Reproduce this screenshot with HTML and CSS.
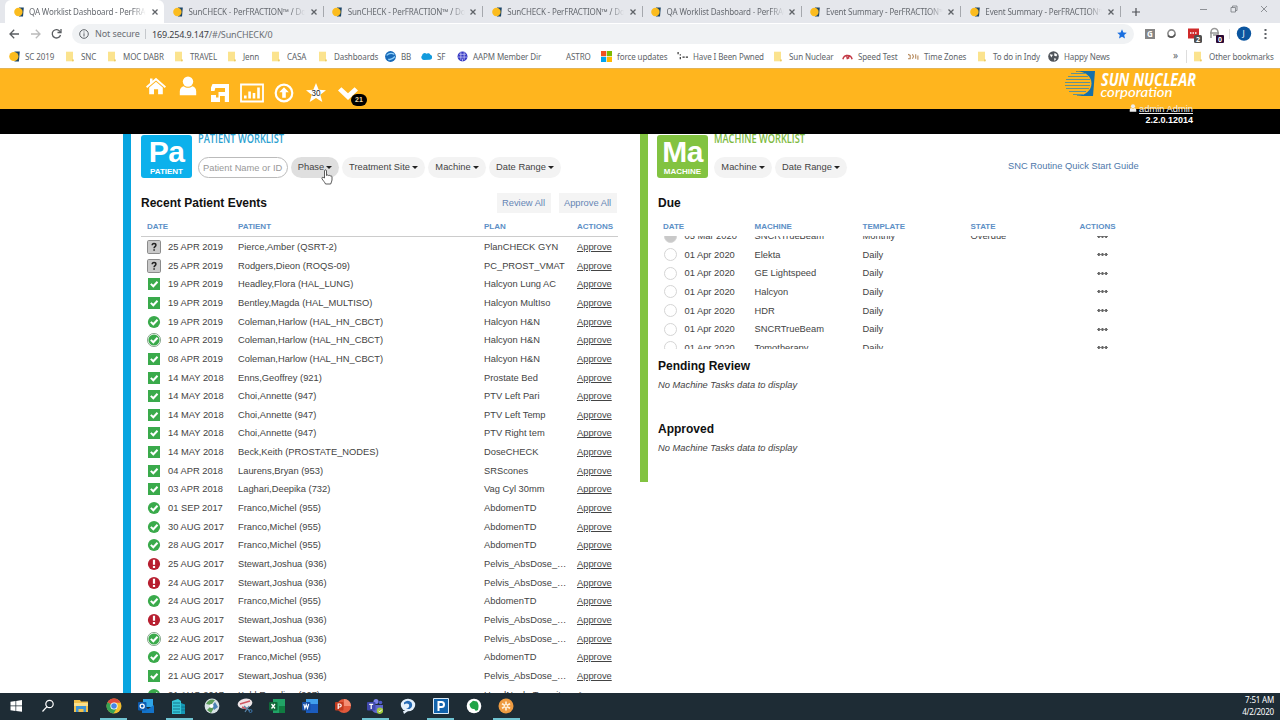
FILE: index.html
```html
<!DOCTYPE html>
<html lang="en">
<head>
    <meta charset="UTF-8">
    <meta name="viewport" content="width=device-width, initial-scale=1.0">
    <title>QA Worklist Dashboard - PerFRACTION</title>
    <link rel="stylesheet" href="styles.css">
</head>
<body>
    <!-- shared icons -->
    <svg class="defs" width="0" height="0">
        <symbol id="fav" viewBox="0 0 10 10"><path d="M5 .5h4.8L9 9.5H5z" fill="#1d4668"/><circle cx="4.4" cy="5" r="4.2" fill="#fbbc1f"/></symbol>
        <symbol id="folder" viewBox="0 0 10 11"><path d="M.5 .7h7v9.6h-7z" fill="#fbe38e"/><path d="M6.500 8.6h1.800v1.700H6.500z" fill="#eccb62"/></symbol>
        <symbol id="x" viewBox="0 0 8 8"><path d="M1.500 1.500l5 5m0-5l-5 5" stroke="#5f6368" stroke-width="1.300"/></symbol>
        <symbol id="unknown" viewBox="0 0 14 14"><rect x=".5" y=".5" width="13" height="13" rx="1.2" fill="#c9c9c9" stroke="#8b8b8b"/><path d="M5.2 5.3c0-2.4 3.7-2.3 3.7-.1 0 1.4-1.8 1.4-1.8 3M7.1 9.2v1.5" fill="none" stroke="#222" stroke-width="1.5"/></symbol>
        <symbol id="ok" viewBox="0 0 14 14"><path d="M1 1h12v12H1z" fill="#3aaa4b"/><path d="M3.8 6.9l2.5 2.4 4.2-4.5" fill="none" stroke="#fff" stroke-width="2"/></symbol>
        <symbol id="ok-round" viewBox="0 0 14 14"><circle cx="7" cy="7" r="6.1" fill="#3aaa4b"/><path d="M3.8 6.9l2.5 2.4 4.2-4.5" fill="none" stroke="#fff" stroke-width="2"/></symbol>
        <symbol id="ok-ring" viewBox="0 0 14 14"><circle cx="7" cy="7" r="6.6" fill="#fff" stroke="#5f8866" stroke-width=".7"/><circle cx="7" cy="7" r="5.6" fill="#3aaa4b"/><path d="M3.8 6.9l2.5 2.4 4.2-4.5" fill="none" stroke="#fff" stroke-width="2"/></symbol>
        <symbol id="fail" viewBox="0 0 14 14"><circle cx="7" cy="7" r="6.1" fill="#b71f30"/><path d="M7 2.8v5M7 9.1v2" stroke="#fff" stroke-width="2.2"/></symbol>
        <symbol id="user" viewBox="0 0 18 20"><circle cx="9" cy="5.6" r="5.2"/><path d="M.8 19.3v-4c0-3 2-4.5 4-5 2.5 2 5.9 2 8.4 0 2 .5 4 2 4 5v4z"/></symbol>
    </svg>

    <div class="tabs">
        <div class="tab active"><svg class="fav"><use href="#fav"/></svg><span>QA Worklist Dashboard - PerFRACTION™</span><svg class="close"><use href="#x"/></svg></div>
        <div class="tab"><svg class="fav"><use href="#fav"/></svg><span>SunCHECK - PerFRACTION™ / Dose</span><svg class="close"><use href="#x"/></svg></div>
        <div class="tab"><svg class="fav"><use href="#fav"/></svg><span>SunCHECK - PerFRACTION™ / Dose</span><svg class="close"><use href="#x"/></svg></div>
        <div class="tab"><svg class="fav"><use href="#fav"/></svg><span>SunCHECK - PerFRACTION™ / Dose</span><svg class="close"><use href="#x"/></svg></div>
        <div class="tab"><svg class="fav"><use href="#fav"/></svg><span>QA Worklist Dashboard - PerFRACTION™</span><svg class="close"><use href="#x"/></svg></div>
        <div class="tab"><svg class="fav"><use href="#fav"/></svg><span>Event Summary - PerFRACTION™</span><svg class="close"><use href="#x"/></svg></div>
        <div class="tab"><svg class="fav"><use href="#fav"/></svg><span>Event Summary - PerFRACTION™</span><svg class="close"><use href="#x"/></svg></div>
        <svg class="new-tab" width="10" height="10" viewBox="0 0 10 10"><path d="M5 1v8M1 5h8" stroke="#4c4f54" stroke-width="1.2"/></svg>
        <svg class="win" width="70" height="10" viewBox="0 0 70 10" fill="none" stroke="#777b80" stroke-width=".8"><path d="M1 5.5h7M32 3.5h4.5v4.5H32zM33.5 3.5V2H38v4.5h-1.5M62 2l6 6m0-6l-6 6"/></svg>
    </div>

    <div class="toolbar">
        <svg class="nav-btns" width="58" height="14" viewBox="0 0 58 14" fill="none" stroke="#5a5d61" stroke-width="1.3"><path d="M10 7H1m4.2-4.2L1 7l4.2 4.2"/><path d="M22 7h9m-4.2-4.2L31 7l-4.2 4.2" stroke="#bbb"/><path d="M51 4.5A4.2 4.2 0 1 0 51.500 8M52 2v3.500h-3.500"/></svg>
        <div class="omnibox">
            <svg width="10" height="10" viewBox="0 0 10 10" fill="none" stroke="#5f6368"><circle cx="5" cy="5" r="4.3"/><path d="M5 4.3v3.2M5 2.5v1"/></svg>
            <span class="insecure">Not secure</span>
            <span class="url"><b>169.254.9.147</b>/#/SunCHECK/0</span>
            <svg class="star" width="10" height="10" viewBox="0 0 10 10"><path d="M5 .2l1.4 3.2 3.4.3-2.6 2.3.8 3.5L5 7.7 2 9.5l.8-3.5L.2 3.7l3.4-.3z" fill="#1a6fe0"/></svg>
        </div>
        <svg class="ext" width="130" height="20" viewBox="0 0 130 20">
            <path d="M1 5h10v10H1z" fill="#858585"/><text x="3" y="13" font-size="8" font-weight="bold" fill="#fff">G</text>
            <circle cx="27.5" cy="9.5" r="3.6" fill="#fff" stroke="#888" stroke-width="1.6"/><path d="M24 11.500a4 4 0 0 0 7-1" fill="none" stroke="#555" stroke-width="1.800"/>
            <path d="M44 4.5h11v10H44z" fill="#cf2b2b"/><path d="M46 9h7" stroke="#fff" stroke-width="1.5" stroke-dasharray="1.5 1"/>
            <rect x="50" y="11" width="8" height="8" rx="1.5" fill="#505050"/><text x="52" y="17.8" font-size="7" font-weight="bold" fill="#fff">2</text>
            <path d="M67 14V8a3.5 3.5 0 0 1 7 0v6M66 9h9M69 11h4" fill="none" stroke="#999" stroke-width="1.5"/>
            <rect x="72" y="11" width="8" height="8" rx="1" fill="#2b0934"/><text x="74" y="17.8" font-size="7" font-weight="bold" fill="#fff">0</text>
            <path d="M85.500 5v10" stroke="#ddd"/>
            <circle cx="100" cy="9.6" r="7.2" fill="#0b559f"/><text x="98.5" y="12.5" font-size="8" fill="#fff">J</text>
            <path d="M120.500 5h2v2h-2zM120.500 9h2v2h-2zM120.500 13h2v2h-2z" fill="#5f6368"/>
        </svg>
    </div>

    <div class="bookmarks">
        <a><svg><use href="#fav"/></svg>SC 2019</a>
        <a><svg><use href="#folder"/></svg>SNC</a>
        <a><svg><use href="#folder"/></svg>MOC DABR</a>
        <a><svg><use href="#folder"/></svg>TRAVEL</a>
        <a><svg><use href="#folder"/></svg>Jenn</a>
        <a><svg><use href="#folder"/></svg>CASA</a>
        <a><svg><use href="#folder"/></svg>Dashboards</a>
        <a><svg viewBox="0 0 10 10"><circle cx="5" cy="5" r="4.9" fill="#1769b8"/><path d="M1.5 4q3-3 7-1M3 7.5q3 1 6-2.5" stroke="#8fd0fa" fill="none" stroke-width="1.2"/></svg>BB</a>
        <a><svg viewBox="0 0 10 10"><path d="M2.500 8.200A2.500 2.500 0 0 1 1 4a2.400 2.400 0 0 1 4-1.500A2.200 2.200 0 0 1 8.500 3.500 2.300 2.300 0 0 1 8 8z" fill="#139bdd"/></svg>SF</a>
        <a><svg viewBox="0 0 10 10"><circle cx="5" cy="5" r="4.5" fill="#3639c4"/><path d="M2 3h6M1 5.5h8M3.5 1v7M6.5 1v7M5 7v3" stroke="#c8c8f4" stroke-width=".7"/></svg>AAPM Member Dir</a>
        <a><svg></svg>ASTRO</a>
        <a><svg viewBox="0 0 10 10"><path d="M0 0h4.7v4.7H0z" fill="#f25022"/><path d="M5.3 0H10v4.7H5.3z" fill="#7fba00"/><path d="M0 5.3h4.7V10H0z" fill="#00a4ef"/><path d="M5.3 5.3H10V10H5.3z" fill="#ffb900"/></svg>force updates</a>
        <a><svg viewBox="0 0 10 10"><path d="M1 1v2M3 3v1M3 5.5v2M5 5.500h2M8 5.500h2" stroke="#333" stroke-width="1.1"/></svg>Have I Been Pwned</a>
        <a><svg><use href="#folder"/></svg>Sun Nuclear</a>
        <a><svg viewBox="0 0 10 10"><path d="M.8 7.5a4.3 4.3 0 0 1 8.4 0M5 7.5L4 3.5M6 7V4" stroke="#c23845" stroke-width="1.3" fill="none"/></svg>Speed Test</a>
        <a><svg viewBox="0 0 10 10"><path d="M0 3l2 1v3H0M4 3l1 2-1 2M7 3v4M9 4v4" stroke="#b78a5d" fill="none"/></svg>Time Zones</a>
        <a><svg><use href="#folder"/></svg>To do in Indy</a>
        <a><svg viewBox="0 0 10 10"><circle cx="5" cy="5" r="4.8" fill="#50545a"/><path d="M1.5 3l3 .5L3 6zM6 1.5l2.5 2-1 1.5-2-1zM5.5 6.5l2 .5-1.5 2z" fill="#fff"/></svg>Happy News</a>
        <span class="more">»</span>
        <a class="other"><svg><use href="#folder"/></svg>Other bookmarks</a>
    </div>

    <header class="app-header">
        <nav class="app-nav">
            <svg class="up" viewBox="0 0 20 18"><path d="M10 .8L20 9.5l-1.200 1.400L10 3.400 1.200 10.900 0 9.500l4-3.500V1.500h2.500v2.300z"/><path d="M3.200 10.500L10 4.700l6.800 5.800v6.700h-4.700v-5H8v5H3.200z"/></svg>
            <svg class="up"><use href="#user"/></svg>
            <svg viewBox="0 0 20 20"><path d="M5 1h14v18h-4.200v-6H10v6H1v-7h5v2.500h2.500V9H15V5H5.300l-.8 3H1V4.500L2.500 1z"/></svg>
            <svg class="wide" viewBox="0 0 24 19"><path d="M1 1h22v17H1z" fill="none" stroke="#fff" stroke-width="1.8"/><path d="M4 12h2.600v3H4zM8.300 8h2.600v7H8.300zM12.700 9.500h2.600V15h-2.600zM17.200 4h2.600v11h-2.600z"/></svg>
            <svg viewBox="0 0 20 20"><circle cx="10" cy="10" r="8.3" fill="none" stroke="#fff" stroke-width="2.2"/><path d="M10 4.2l4.800 5h-3v5.600H8.200V9.200h-3z"/></svg>
            <svg viewBox="0 0 20 20"><path d="M10 0l2.700 6.800 7.300.4-5.700 4.600 2 7.200L10 15l-6.300 4 2-7.200L0 7.200l7.300-.4z"/><text x="10" y="13.400" text-anchor="middle" font-size="8.500" textLength="9" lengthAdjust="spacingAndGlyphs" fill="#222">30</text></svg>
            <span class="alerts">
                <svg viewBox="0 0 20 20"><path d="M0 7.500l3.400-3.300L10 10.200l6.600-6 3.400 3.300L10 17z"/></svg>
                <em>21</em>
            </span>
        </nav>
        <svg class="brand" width="136" height="32" viewBox="0 0 136 32">
            <path d="M12 2h19l-2 25H13z" fill="#1470a9"/>
            <ellipse cx="14" cy="14.5" rx="13.5" ry="12" fill="#ffb51e"/>
            <path d="M7 4.500h14M4 7.500h20M2 10.500h24M1 13.500h25M1 16.500h25M2 19.500h23M5 22.500h17M9 25.500h10" stroke="#5f9292" stroke-width="1.1"/>
            <text class="sun" x="37" y="16.5" textLength="95" lengthAdjust="spacingAndGlyphs">SUN NUCLEAR</text>
            <text class="corp" x="36.5" y="28" textLength="72" lengthAdjust="spacingAndGlyphs">corporation</text>
        </svg>
        <div class="account">
            <div><svg><use href="#user"/></svg><a>admin Admin</a></div>
            <b>2.2.0.12014</b>
        </div>
    </header>

    <main class="worklists">
        <section class="patient">
            <div class="head">
                <div class="tile"><b>Pa</b><span>PATIENT</span></div>
                <div>
                    <svg class="title" width="90" height="11"><text x="0" y="9" textLength="86" lengthAdjust="spacingAndGlyphs">PATIENT WORKLIST</text></svg>
                    <div class="filters">
                        <input type="text" placeholder="Patient Name or ID">
                        <button class="phase hover">Phase<i></i></button>
                        <button class="site">Treatment Site<i></i></button>
                        <button class="mach">Machine<i></i></button>
                        <button class="range">Date Range<i></i></button>
                        <svg class="cursor" viewBox="0 0 12 16"><path d="M3.5 9V2c0-1.600 2-1.600 2 0v4.500c.3-.8 1.700-.7 1.900.2.500-.7 1.700-.4 1.800.4.700-.5 1.800-.1 1.800.9v3c0 1.500-1 2.300-1.300 4H4.500C4 13.500 2 11.500 1 9.800c-.6-1.200.8-2 1.700-1.200z" fill="#fff" stroke="#333" stroke-width=".8"/></svg>
                    </div>
                </div>
            </div>
            <div class="sub">
                <h2>Recent Patient Events</h2>
                <button class="review">Review All</button>
                <button class="approve">Approve All</button>
            </div>
            <div class="row th"><span class="date">DATE</span><span>PATIENT</span><span>PLAN</span><span>ACTIONS</span></div>
            <div class="events">
                <div class="row"><svg><use href="#unknown"/></svg><span>25 APR 2019</span><span>Pierce,Amber (QSRT-2)</span><span>PlanCHECK GYN</span><a>Approve</a></div>
                <div class="row"><svg><use href="#unknown"/></svg><span>25 APR 2019</span><span>Rodgers,Dieon (ROQS-09)</span><span>PC_PROST_VMAT</span><a>Approve</a></div>
                <div class="row"><svg><use href="#ok"/></svg><span>19 APR 2019</span><span>Headley,Flora (HAL_LUNG)</span><span>Halcyon Lung AC</span><a>Approve</a></div>
                <div class="row"><svg><use href="#ok"/></svg><span>19 APR 2019</span><span>Bentley,Magda (HAL_MULTISO)</span><span>Halcyon MultIso</span><a>Approve</a></div>
                <div class="row"><svg><use href="#ok-round"/></svg><span>19 APR 2019</span><span>Coleman,Harlow (HAL_HN_CBCT)</span><span>Halcyon H&amp;N</span><a>Approve</a></div>
                <div class="row"><svg><use href="#ok-ring"/></svg><span>10 APR 2019</span><span>Coleman,Harlow (HAL_HN_CBCT)</span><span>Halcyon H&amp;N</span><a>Approve</a></div>
                <div class="row"><svg><use href="#ok"/></svg><span>08 APR 2019</span><span>Coleman,Harlow (HAL_HN_CBCT)</span><span>Halcyon H&amp;N</span><a>Approve</a></div>
                <div class="row"><svg><use href="#ok"/></svg><span>14 MAY 2018</span><span>Enns,Geoffrey (921)</span><span>Prostate Bed</span><a>Approve</a></div>
                <div class="row"><svg><use href="#ok"/></svg><span>14 MAY 2018</span><span>Choi,Annette (947)</span><span>PTV Left Pari</span><a>Approve</a></div>
                <div class="row"><svg><use href="#ok"/></svg><span>14 MAY 2018</span><span>Choi,Annette (947)</span><span>PTV Left Temp</span><a>Approve</a></div>
                <div class="row"><svg><use href="#ok"/></svg><span>14 MAY 2018</span><span>Choi,Annette (947)</span><span>PTV Right tem</span><a>Approve</a></div>
                <div class="row"><svg><use href="#ok"/></svg><span>14 MAY 2018</span><span>Beck,Keith (PROSTATE_NODES)</span><span>DoseCHECK</span><a>Approve</a></div>
                <div class="row"><svg><use href="#ok"/></svg><span>04 APR 2018</span><span>Laurens,Bryan (953)</span><span>SRScones</span><a>Approve</a></div>
                <div class="row"><svg><use href="#ok"/></svg><span>03 APR 2018</span><span>Laghari,Deepika (732)</span><span>Vag Cyl 30mm</span><a>Approve</a></div>
                <div class="row"><svg><use href="#ok-round"/></svg><span>01 SEP 2017</span><span>Franco,Michel (955)</span><span>AbdomenTD</span><a>Approve</a></div>
                <div class="row"><svg><use href="#ok-round"/></svg><span>30 AUG 2017</span><span>Franco,Michel (955)</span><span>AbdomenTD</span><a>Approve</a></div>
                <div class="row"><svg><use href="#ok-round"/></svg><span>28 AUG 2017</span><span>Franco,Michel (955)</span><span>AbdomenTD</span><a>Approve</a></div>
                <div class="row"><svg><use href="#fail"/></svg><span>25 AUG 2017</span><span>Stewart,Joshua (936)</span><span>Pelvis_AbsDose_…</span><a>Approve</a></div>
                <div class="row"><svg><use href="#fail"/></svg><span>24 AUG 2017</span><span>Stewart,Joshua (936)</span><span>Pelvis_AbsDose_…</span><a>Approve</a></div>
                <div class="row"><svg><use href="#ok-round"/></svg><span>24 AUG 2017</span><span>Franco,Michel (955)</span><span>AbdomenTD</span><a>Approve</a></div>
                <div class="row"><svg><use href="#fail"/></svg><span>23 AUG 2017</span><span>Stewart,Joshua (936)</span><span>Pelvis_AbsDose_…</span><a>Approve</a></div>
                <div class="row"><svg><use href="#ok-ring"/></svg><span>22 AUG 2017</span><span>Stewart,Joshua (936)</span><span>Pelvis_AbsDose_…</span><a>Approve</a></div>
                <div class="row"><svg><use href="#ok-round"/></svg><span>22 AUG 2017</span><span>Franco,Michel (955)</span><span>AbdomenTD</span><a>Approve</a></div>
                <div class="row"><svg><use href="#ok"/></svg><span>21 AUG 2017</span><span>Stewart,Joshua (936)</span><span>Pelvis_AbsDose_…</span><a>Approve</a></div>
                <div class="row"><svg><use href="#ok-round"/></svg><span>21 AUG 2017</span><span>Kehl,Rosalina (907)</span><span>HeadNeck_Transit</span><a>Approve</a></div>
            </div>
        </section>

        <section class="machine">
            <div class="head">
                <div class="tile"><b>Ma</b><span>MACHINE</span></div>
                <div>
                    <svg class="title" width="96" height="11"><text x="0" y="9" textLength="91" lengthAdjust="spacingAndGlyphs">MACHINE WORKLIST</text></svg>
                    <div class="filters">
                        <button class="mach">Machine<i></i></button>
                        <button class="range">Date Range<i></i></button>
                    </div>
                </div>
                <a class="guide">SNC Routine Quick Start Guide</a>
            </div>
            <div class="sub"><h2>Due</h2></div>
            <div class="row th"><span class="date">DATE</span><span>MACHINE</span><span>TEMPLATE</span><span>STATE</span><span>ACTIONS</span></div>
            <div class="due">
                <div class="row"><i class="dot late"></i><span>05 Mar 2020</span><span>SNCRTrueBeam</span><span>Monthly</span><span>Overdue</span><em></em></div>
                <div class="row"><i class="dot"></i><span>01 Apr 2020</span><span>Elekta</span><span>Daily</span><span></span><em></em></div>
                <div class="row"><i class="dot"></i><span>01 Apr 2020</span><span>GE Lightspeed</span><span>Daily</span><span></span><em></em></div>
                <div class="row"><i class="dot"></i><span>01 Apr 2020</span><span>Halcyon</span><span>Daily</span><span></span><em></em></div>
                <div class="row"><i class="dot"></i><span>01 Apr 2020</span><span>HDR</span><span>Daily</span><span></span><em></em></div>
                <div class="row"><i class="dot"></i><span>01 Apr 2020</span><span>SNCRTrueBeam</span><span>Daily</span><span></span><em></em></div>
                <div class="row"><i class="dot"></i><span>01 Apr 2020</span><span>Tomotherapy</span><span>Daily</span><span></span><em></em></div>
            </div>
            <h2 class="pending">Pending Review</h2>
            <p>No Machine Tasks data to display</p>
            <h2 class="approved">Approved</h2>
            <p>No Machine Tasks data to display</p>
        </section>
    </main>

    <footer class="taskbar">
        <div class="app"><svg viewBox="0 0 16 16"><path d="M2.500 3.700l5-.7v4.600h-5zM8.200 2.900l5.800-.8v5.500H8.200zM2.500 8.300h5v4.600l-5-.7zM8.200 8.300H14v5.500l-5.800-.8z" fill="#fff"/></svg></div>
        <div class="app"><svg viewBox="0 0 16 16" fill="none" stroke="#fff" stroke-width="1.2"><circle cx="9.5" cy="6" r="3.7"/><path d="M7 8.7L2.500 13.500"/></svg></div>
        <div class="app"><svg viewBox="0 0 16 16"><path d="M1 2h6l1 1.500h7V14H1z" fill="#f2c14a"/><path d="M1 5h14v3H1z" fill="#fbe08a"/><path d="M3 8h10v6h-2.500v-3h-5v3H3z" fill="#4095d3"/></svg></div>
        <div class="app open"><svg viewBox="0 0 16 16"><circle cx="8" cy="8" r="7.5" fill="#f1bd2e"/><path d="M8 8L1.500 4.200A7.500 7.500 0 0 1 14.700 4.700H8z" fill="#dd4b3e"/><path d="M1.500 4.200A7.500 7.500 0 0 0 7.500 15.500L11 9.700 8 8z" fill="#38a355"/><circle cx="8" cy="8" r="3.6" fill="#fff"/><circle cx="8" cy="8" r="2.8" fill="#4486e8"/></svg></div>
        <div class="app"><svg viewBox="0 0 16 16"><path d="M5 1h10v8H5z" fill="#2fa6e8"/><path d="M4 7l6 4 6-4v8H4z" fill="#1373c9"/><rect x="0" y="4" width="8.5" height="8.5" rx="1" fill="#0d5bb0"/><circle cx="4.2" cy="8.2" r="2" fill="none" stroke="#fff" stroke-width="1.3"/></svg></div>
        <div class="app open"><svg viewBox="0 0 16 16"><path d="M1 3l6-2 3 2v13H1z" fill="#36c6d8"/><path d="M10 5l4 1.500V16h-4z" fill="#1598b6"/><path d="M2 5h7M2 8h7M2 11h7M2 14h7M10.500 9H14m-3.500 3H14" stroke="#106e86" stroke-width=".9"/></svg></div>
        <div class="app"><svg viewBox="0 0 16 16"><circle cx="8" cy="8" r="7.4" fill="#d9e2e5"/><path d="M2 6q3-6 9-4l-4 5zM3 12l4-4 3 2-3 5z" fill="#5a9b59"/><path d="M8 8l3-4 3 5-4 3z" fill="#4c83b5"/><circle cx="7.5" cy="8" r="2" fill="#fff"/></svg></div>
        <div class="app"><svg viewBox="0 0 16 16"><ellipse cx="8" cy="5.5" rx="7.4" ry="4.8" fill="#eee6e8" transform="rotate(-12 8 5.5)"/><path d="M3 6l10-3M5 9l5 2" stroke="#d05661" stroke-width="1.4"/><path d="M7 8l6 5M12 8l-4 6" stroke="#5c89ab" stroke-width="1.2"/><circle cx="13.5" cy="13" r="1.5" fill="none" stroke="#3d77b0"/></svg></div>
        <div class="app"><svg viewBox="0 0 16 16"><path d="M4 1h12v14H4z" fill="#21a366"/><path d="M10 8h6v7h-6z" fill="#107c41"/><rect y="4" width="8.5" height="8.5" rx="1" fill="#0f6939"/><path d="M2.500 6l3.500 4.500M6 6l-3.500 4.500" stroke="#fff" stroke-width="1.3"/></svg></div>
        <div class="app"><svg viewBox="0 0 16 16"><path d="M4 1h12v14H4z" fill="#41a0ec"/><path d="M4 6h12v9H4z" fill="#1b5cbe"/><rect y="4" width="8.5" height="8.5" rx="1" fill="#184fa5"/><path d="M1.800 6l1.100 4.400L4.200 6.500l1.300 3.900L6.700 6" fill="none" stroke="#fff" stroke-width="1.1"/></svg></div>
        <div class="app"><svg viewBox="0 0 16 16"><circle cx="9" cy="8" r="7" fill="#e2593b"/><path d="M9 1a7 7 0 0 1 7 7H9z" fill="#f58f74"/><rect y="4" width="8.5" height="8.5" rx="1" fill="#c13b1f"/><path d="M3.200 11V6h1.500a1.500 1.500 0 0 1 0 3H3.200" fill="none" stroke="#fff" stroke-width="1.2"/></svg></div>
        <div class="app open"><svg viewBox="0 0 16 16"><circle cx="9" cy="3.5" r="2.5" fill="#7b83eb"/><circle cx="13.5" cy="4.5" r="1.8" fill="#5059c9"/><path d="M5 7h11v5q-2 4-7 3-4-1-4-4z" fill="#5e66cd"/><rect y="4" width="8.5" height="8.5" rx="1" fill="#4149ae"/><path d="M2.200 6.300h4M4.200 6.300V11" stroke="#fff" stroke-width="1.2"/><circle cx="13" cy="12.7" r="3.2" fill="#9fc93c"/><path d="M11.500 12.700l1.200 1.200 2-2.200" fill="none" stroke="#fff"/></svg></div>
        <div class="app"><svg viewBox="0 0 16 16"><ellipse cx="8" cy="7" rx="7.2" ry="6.300" fill="#e4f0fb"/><path d="M3 13l1 3 4-3z" fill="#e4f0fb"/><path d="M4 4.500q4-3.500 7.500 0 2 4-2 6.500H6q4-1.500 3-4.500-2-2-5 0z" fill="#266bb5"/></svg></div>
        <div class="app open"><svg viewBox="0 0 16 16"><path d="M.5.5h15v15H.5z" fill="#1263ac" stroke="#dceaf5"/><path d="M5.500 13V4h3a2.500 2.500 0 0 1 0 5h-3" fill="none" stroke="#fff" stroke-width="2"/></svg></div>
        <div class="app"><svg viewBox="0 0 16 16"><circle cx="8" cy="8" r="7.300" fill="#fff"/><path d="M3.500 6L7 2.800l4 .7q2.500 3 1 8.500-3 2-3.500-1-4.500.5-5-5z" fill="#20a447"/></svg></div>
        <div class="app open"><svg viewBox="0 0 16 16"><circle cx="8" cy="8" r="7.5" fill="#ef9c42"/><path d="M8 3.500v9M4 5.700l8 4.600M12 5.700l-8 4.600" stroke="#fff3df" stroke-width="1.600"/><circle cx="8" cy="8" r="1" fill="#ef9c42"/></svg></div>
        <div class="clock">7:51 AM<br>4/2/2020</div>
    </footer>
</body>
</html>
```
FILE: styles.css
```css
* {
    margin: 0;
    padding: 0;
    box-sizing: border-box;
}

body {
    width: 1280px;
    height: 720px;
    overflow: hidden;
    display: flex;
    flex-direction: column;
    background: #fff;
    color: #444;
    font-family: "Liberation Sans", Arial, sans-serif;
    font-size: 9.33px;
}

.defs {
    position: absolute;
}

svg {
    flex: none;
}

button, input {
    font: inherit;
    border: none;
    outline: none;
}

/* browser */
.tabs, .toolbar, .bookmarks, .taskbar {
    font-family: "Noto Sans", "Open Sans", sans-serif;
}

.tabs {
    display: flex;
    height: 23px;
    padding-left: 5px;
    background: #e5e7ec;
    font-size: 8px;
    color: #666a70;
}

.tab {
    display: flex;
    align-items: center;
    width: 159.4px;
    padding-left: 8.5px;
    background: linear-gradient(#a5a8ad, #a5a8ad) right 6px / 1px 11px no-repeat;
}

.tab.active {
    background: #fff;
    border-radius: 6px 6px 0 0;
}

.tab span {
    width: 117px;
    margin-left: 5.5px;
    overflow: hidden;
    white-space: nowrap;
    letter-spacing: -0.15px;
    -webkit-mask-image: linear-gradient(to right, #000 88%, transparent);
    mask-image: linear-gradient(to right, #000 88%, transparent);
}

.fav {
    width: 10px;
    height: 10px;
}

.close {
    width: 8px;
    height: 8px;
    margin-left: 4.5px;
}

.new-tab {
    margin: 6.5px 0 0 10px;
}

.win {
    margin: 4px 11px 0 auto;
}

.toolbar {
    display: flex;
    align-items: center;
    height: 22px;
    padding-left: 9px;
}

.omnibox {
    display: flex;
    align-items: center;
    width: 1062px;
    height: 20px;
    margin-left: 5px;
    padding: 0 7px;
    border-radius: 10px;
    background: #f0f2f4;
    color: #6a6e73;
    font-size: 9px;
}

.insecure {
    width: 51px;
    margin-left: 6px;
    border-right: 1px solid #c5c8cc;
    line-height: 10px;
    white-space: nowrap;
    letter-spacing: -0.1px;
}

.url {
    margin-left: 6px;
    letter-spacing: -0.15px;
}

.url b {
    font-weight: normal;
    color: #3d4044;
}

.star {
    margin-left: auto;
}

.ext {
    margin-left: 10px;
}

.bookmarks {
    display: grid;
    grid-template-columns: 56px 42px 67px 53px 44px 47px 67px 36px 36px 93px 51px 76px 96px 69px 66px 69px 71px 125px 20px 1fr;
    align-items: center;
    height: 23px;
    padding: 0 0 1px 9px;
    font-size: 8px;
    color: #606469;
}

.bookmarks a {
    display: flex;
    align-items: center;
    white-space: nowrap;
    letter-spacing: -0.1px;
}

.bookmarks svg {
    width: 11px;
    height: 11px;
    margin-right: 5px;
}

.more {
    height: 13px;
    line-height: 11px;
    font-size: 10px;
    border-right: 1px solid #ddd;
    width: 14px;
}

/* application header */
.app-header {
    position: relative;
    display: flex;
    height: 66px;
    padding-left: 140px;
    background: linear-gradient(#ffb51e 40px, #000 40px);
    border-top: 1px solid #e3b455;
}

.app-nav {
    display: flex;
    align-items: center;
    height: 48px;
    fill: #fff;
}

.app-nav svg {
    width: 20px;
    height: 20px;
    margin: 0 6px;
}

.app-nav .up {
    margin-top: -15px;
}

.app-nav .wide {
    width: 24px;
    margin: 0 4px;
}

.alerts {
    position: relative;
}

.alerts svg {
    display: block;
}

.alerts em {
    position: absolute;
    left: 19px;
    top: 11px;
    width: 16px;
    height: 12px;
    border-radius: 6px;
    background: #000;
    color: #eed9a4;
    font: bold 7px/12px "Liberation Sans", sans-serif;
    text-align: center;
}

.brand {
    margin-left: 700px;
    fill: #fff;
}

.sun {
    font: italic bold 18px "Open Sans", sans-serif;
}

.corp {
    font: italic 500 13.5px Lato, sans-serif;
}

.account {
    position: absolute;
    right: 87px;
    top: 35px;
    line-height: 10.5px;
    text-align: right;
    color: #fff;
}

.account div {
    color: #eee;
}

.account a {
    text-decoration: underline;
}

.account svg {
    width: 8px;
    height: 8px;
    margin-right: 2px;
    fill: #eee;
}

.account b {
    display: block;
    font-size: 9px;
}

/* worklists */
.worklists {
    display: flex;
    align-items: flex-start;
    height: 559px;
    padding-left: 123px;
    overflow: hidden;
}

.patient {
    width: 517px;
    height: 559px;
    padding-left: 10px;
    border-left: 8px solid #08a5e0;
}

.machine {
    width: 520px;
    height: 348px;
    padding-left: 10px;
    border-left: 8px solid #82c341;
}

.head {
    display: flex;
    height: 46px;
}

.tile {
    display: flex;
    flex-direction: column;
    align-items: center;
    width: 51px;
    height: 43px;
    margin: 1px 6px 0 0;
    border-radius: 3px;
    background: #0cb1ec;
    color: #fff;
}

.machine .tile {
    background: #82c341;
    margin-left: -1px;
}

.tile b {
    height: 32px;
    line-height: 34px;
    font-size: 30px;
    letter-spacing: -0.5px;
}

.tile span {
    font-size: 8px;
    font-weight: bold;
    line-height: 9px;
}

.title {
    display: block;
    font: 600 12.5px "Open Sans", sans-serif;
    fill: #2ba0cf;
}

.machine .title {
    fill: #7dba42;
}

.filters {
    position: relative;
    display: flex;
    gap: 3px;
    margin-top: 12px;
}

.filters input {
    width: 90px;
    height: 21px;
    padding: 0 4px;
    border: 1px solid #bbb;
    border-radius: 11px;
}

.filters input::placeholder {
    color: #999;
}

.filters button {
    display: flex;
    align-items: center;
    justify-content: center;
    height: 21px;
    padding-bottom: 1px;
    border-radius: 11px;
    background: #f3f3f3;
    color: #444;
    white-space: nowrap;
}

.filters .hover {
    background: #dfdfdf;
}

.filters i {
    margin: 1px 0 0 2px;
    border: 3px solid transparent;
    border-top-color: #222;
    border-bottom: none;
}

.phase {
    width: 48px;
}

.site {
    width: 83px;
}

.mach {
    width: 58px;
}

.range {
    width: 72px;
}

.cursor {
    position: absolute;
    left: 123px;
    top: 12px;
    width: 12px;
    height: 16px;
}

.guide {
    margin: 27px 0 0 161px;
    color: #4f79ab;
    white-space: nowrap;
}

.sub {
    display: flex;
    align-items: center;
    height: 20px;
    margin-top: 13px;
}

h2 {
    font-size: 12px;
    line-height: 14px;
    color: #111;
}

.sub button {
    height: 20px;
    background: #f4f4f4;
    color: #6686b5;
}

.review {
    width: 54px;
    margin-left: auto;
}

.approve {
    width: 58px;
    margin: 0 23.5px 0 8px;
}

.row {
    display: grid;
    grid-template-columns: 27px 70px 246px 93px 1fr;
    align-items: center;
    height: 18.67px;
    white-space: nowrap;
}

.row a {
    text-decoration: underline;
}

.row svg {
    width: 14px;
    height: 14px;
    margin-left: 6px;
}

.th {
    height: 24px;
    width: 477px;
    padding-top: 3px;
    border-bottom: 1px solid #ccc;
    font-size: 8px;
    font-weight: bold;
    color: #5c8fc6;
}

.th .date {
    grid-column: 1 / 3;
    padding-left: 6px;
}

.events {
    padding-top: 0.6px;
}

.machine .row {
    width: auto;
    grid-template-columns: 26.5px 70px 108px 108px 109px 1fr;
}

.machine .th {
    border: none;
    height: 23px;
}

.machine .th .date {
    padding-left: 5px;
}

.due {
    height: 113px;
    overflow: hidden;
}

.due .row:first-child {
    margin-top: -9.33px;
}

.dot {
    width: 13px;
    height: 13px;
    margin-left: 6px;
    border: 1px solid #d5d5d5;
    border-radius: 50%;
}

.late {
    background: #c9c9c9;
}

.row em {
    width: 11px;
    height: 3px;
    margin-left: 17px;
    background: radial-gradient(circle, #666 1.3px, transparent 1.7px) 0 0 / 3.67px 3px;
}

.pending {
    margin-top: 10px;
}

.approved {
    margin-top: 31px;
}

.machine p {
    margin-top: 7px;
    line-height: 11px;
    font-style: italic;
}

/* windows taskbar */
.taskbar {
    display: flex;
    height: 27px;
    background: #1e2c35;
}

.app {
    display: flex;
    justify-content: center;
    width: 27px;
    margin-right: 5.72px;
    padding-top: 5px;
}

.app:first-child {
    margin-left: 2px;
}

.app svg {
    width: 16px;
    height: 16px;
}

.open {
    border-bottom: 2px solid #70c4d2;
}

.clock {
    margin: 1px 6px 0 auto;
    font-size: 8px;
    line-height: 12px;
    text-align: right;
    color: #fff;
    letter-spacing: -0.2px;
}
```
